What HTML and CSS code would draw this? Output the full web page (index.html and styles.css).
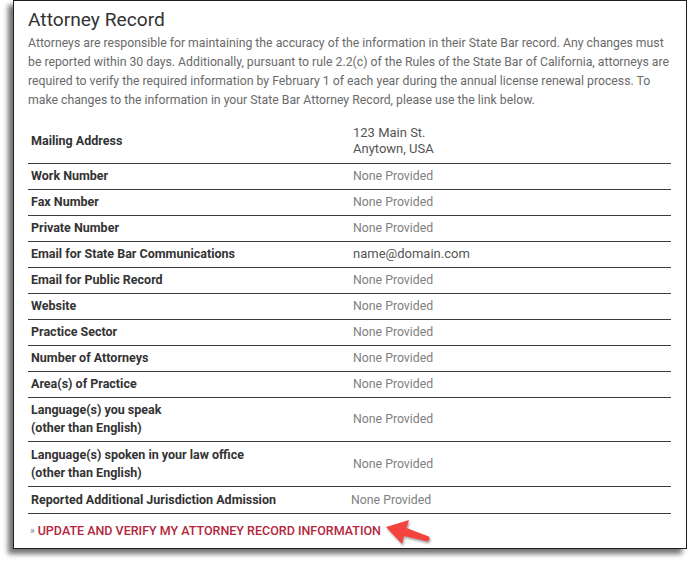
FILE: index.html
```html
<!DOCTYPE html>
<html>
<head>
<meta charset="utf-8">
<link rel="stylesheet" href="styles.css">
</head>
<body>
<div class="page">
  <div class="card">
    <h1 class="title">Attorney Record</h1>
    <p class="intro">Attorneys are responsible for maintaining the accuracy of the information in their State Bar record. Any changes must be reported within 30 days. Additionally, pursuant to rule 2.2(c) of the Rules of the State Bar of California, attorneys are required to verify the required information by February 1 of each year during the annual license renewal process. To make changes to the information in your State Bar Attorney Record, please use the link below.</p>
    <table class="record">
      <tr class="tall"><td class="label">Mailing Address</td><td class="value dark">123 Main St.<br>Anytown, USA</td></tr>
      <tr><td class="label">Work Number</td><td class="value">None Provided</td></tr>
      <tr><td class="label">Fax Number</td><td class="value">None Provided</td></tr>
      <tr><td class="label">Private Number</td><td class="value">None Provided</td></tr>
      <tr><td class="label">Email for State Bar Communications</td><td class="value dark">name@domain.com</td></tr>
      <tr><td class="label">Email for Public Record</td><td class="value">None Provided</td></tr>
      <tr><td class="label">Website</td><td class="value">None Provided</td></tr>
      <tr><td class="label">Practice Sector</td><td class="value">None Provided</td></tr>
      <tr><td class="label">Number of Attorneys</td><td class="value">None Provided</td></tr>
      <tr><td class="label">Area(s) of Practice</td><td class="value">None Provided</td></tr>
      <tr><td class="label">Language(s) you speak<br>(other than English)</td><td class="value">None Provided</td></tr>
      <tr class="office"><td class="label">Language(s) spoken in your law office<br>(other than English)</td><td class="value">None Provided</td></tr>
      <tr class="last"><td class="label">Reported Additional Jurisdiction Admission</td><td class="value shift">None Provided</td></tr>
    </table>
    <div class="link-row"><span class="chev">»</span><a class="update" href="#">UPDATE AND VERIFY MY ATTORNEY RECORD INFORMATION</a></div>
  </div>
  <svg class="arrow" viewBox="380 512 56 40" width="56" height="40">
    <path d="M386 527 L409 520 L406.5 528 L428.8 536.4 Q431 539.5 427.4 541.6 L404 536 L402 544 Z" fill="#f4433f"/>
  </svg>
</div>
</body>
</html>
```

FILE: styles.css
```css
html, body {
  margin: 0;
  padding: 0;
  background: #ffffff;
}

.page {
  position: relative;
  width: 688px;
  height: 562px;
  padding-left: 13px;
  box-sizing: border-box;
}

.card {
  width: 674px;
  height: 549px;
  box-sizing: border-box;
  border: 1px solid #1e1e1e;
  background: #fff;
  box-shadow: -5px 5px 5px rgba(0, 0, 0, 0.55);
  padding: 6px 15px 0 14px;
  font-family: Roboto, "Liberation Sans", sans-serif;
}

.title {
  margin: 0;
  font-size: 19.2px;
  line-height: 26px;
  font-weight: 400;
  color: #333;
}

.intro {
  margin: 1px 0 0;
  font-size: 12.25px;
  line-height: 19px;
  font-weight: 400;
  color: #6a6a6a;
}

.record {
  margin-top: 9px;
  width: 100%;
  border-collapse: collapse;
}

.record td {
  padding: 3px 3px 4px;
  line-height: 18px;
  font-size: 12.3px;
  vertical-align: middle;
  border-bottom: 1px solid #3c3c3c;
}

.record .label {
  width: 316px;
  font-size: 12.5px;
  font-weight: 700;
  color: #333;
}

.record .value {
  color: #808080;
}

.record .value.dark {
  color: #555;
  font-size: 13px;
}

.record .value.shift {
  padding-left: 1px;
}

.record .tall td {
  padding-top: 6px;
  padding-bottom: 6px;
  height: 32px;
}

.record .tall .value {
  line-height: 16px;
}

.record .office td {
  padding-top: 4px;
  padding-bottom: 4px;
}

.record .last td {
  padding-top: 4px;
  padding-bottom: 4px;
}

.link-row {
  margin-top: 8px;
  line-height: 18px;
  padding-left: 2px;
  display: flex;
  align-items: center;
}

.chev {
  font-size: 10px;
  color: #888;
  margin-right: 3px;
}

.update {
  font-size: 12.5px;
  font-weight: 500;
  color: #b3263b;
  text-decoration: none;
}

.arrow {
  position: absolute;
  left: 380px;
  top: 512px;
  filter: drop-shadow(1px 2px 1px rgba(0, 0, 0, 0.35));
}
```
